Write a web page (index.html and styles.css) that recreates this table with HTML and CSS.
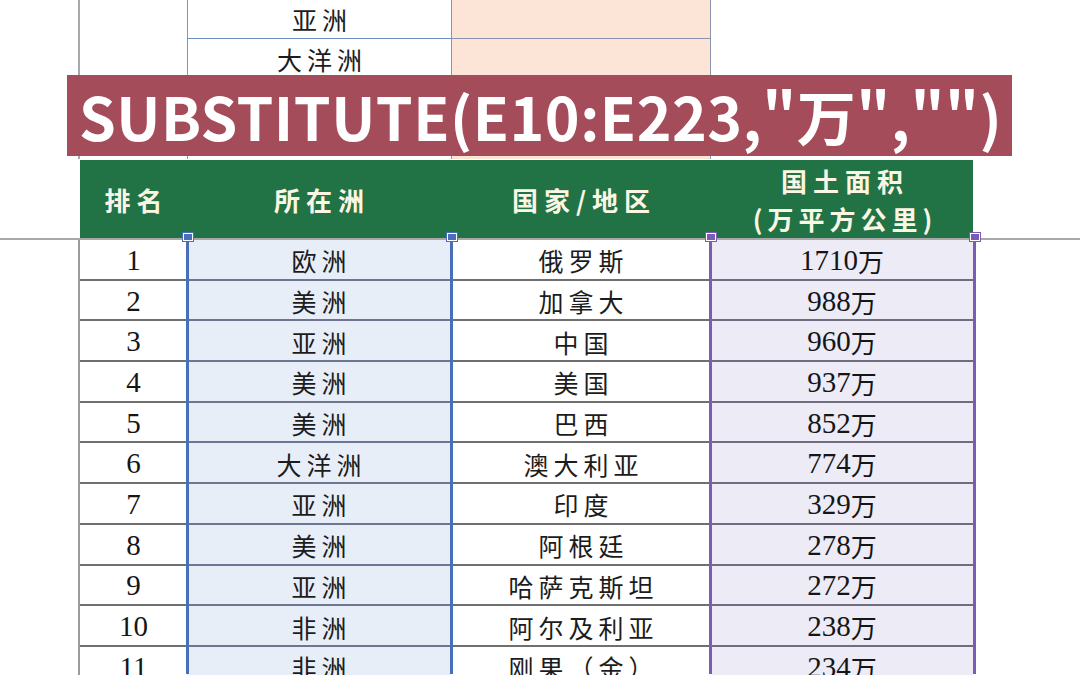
FILE: index.html
```html
<!DOCTYPE html>
<html lang="zh-CN">
<head>
<meta charset="utf-8">
<title>SUBSTITUTE</title>
<link rel="stylesheet" href="styles.css">
</head>
<body>
<div class="sheet">
  <div class="top">
    <div class="g gl"></div><div class="g"></div><div class="g tb zh">亚洲</div><div class="g tp"></div><div class="g"></div><div class="g"></div>
    <div class="g gl"></div><div class="g"></div><div class="g tb zh">大洋洲</div><div class="g tp"></div><div class="g"></div><div class="g"></div>
    <div class="g gl"></div><div class="g"></div><div class="g tb"></div><div class="g tp"></div><div class="g"></div><div class="g"></div>
    <div class="g gl"></div><div class="g"></div><div class="g tb nb"></div><div class="g tp nb"></div><div class="g"></div><div class="g"></div>
  </div>

  <div class="head">
    <div class="hg"></div>
    <div class="h">排名</div>
    <div class="h">所在洲</div>
    <div class="h">国家/地区</div>
    <div class="h two"><span>国土面积</span><span class="paren">(万平方公里)</span></div>
    <div class="hg"></div>
  </div>

  <div class="rows">
    <div class="lg"></div><div class="d num">1</div><div class="d zh cb">欧洲</div><div class="d zh">俄罗斯</div><div class="d num cd">1710<span class="wan">万</span></div><div class="rg"></div>
    <div class="lg"></div><div class="d num">2</div><div class="d zh cb">美洲</div><div class="d zh">加拿大</div><div class="d num cd">988<span class="wan">万</span></div><div class="rg"></div>
    <div class="lg"></div><div class="d num">3</div><div class="d zh cb">亚洲</div><div class="d zh">中国</div><div class="d num cd">960<span class="wan">万</span></div><div class="rg"></div>
    <div class="lg"></div><div class="d num">4</div><div class="d zh cb">美洲</div><div class="d zh">美国</div><div class="d num cd">937<span class="wan">万</span></div><div class="rg"></div>
    <div class="lg"></div><div class="d num">5</div><div class="d zh cb">美洲</div><div class="d zh">巴西</div><div class="d num cd">852<span class="wan">万</span></div><div class="rg"></div>
    <div class="lg"></div><div class="d num">6</div><div class="d zh cb">大洋洲</div><div class="d zh">澳大利亚</div><div class="d num cd">774<span class="wan">万</span></div><div class="rg"></div>
    <div class="lg"></div><div class="d num">7</div><div class="d zh cb">亚洲</div><div class="d zh">印度</div><div class="d num cd">329<span class="wan">万</span></div><div class="rg"></div>
    <div class="lg"></div><div class="d num">8</div><div class="d zh cb">美洲</div><div class="d zh">阿根廷</div><div class="d num cd">278<span class="wan">万</span></div><div class="rg"></div>
    <div class="lg"></div><div class="d num">9</div><div class="d zh cb">亚洲</div><div class="d zh">哈萨克斯坦</div><div class="d num cd">272<span class="wan">万</span></div><div class="rg"></div>
    <div class="lg"></div><div class="d num">10</div><div class="d zh cb">非洲</div><div class="d zh">阿尔及利亚</div><div class="d num cd">238<span class="wan">万</span></div><div class="rg"></div>
    <div class="lg"></div><div class="d num">11</div><div class="d zh cb">非洲</div><div class="d zh">刚果（金）</div><div class="d num cd">234<span class="wan">万</span></div><div class="rg"></div>
  </div>

  <div class="sel sel-b"><span class="hd hl"></span><span class="hd hr"></span></div>
  <div class="sel sel-d"><span class="hd hl"></span><span class="hd hr"></span></div>

  <div class="banner">SUBSTITUTE(E10:E223,"万","")</div>
</div>
</body>
</html>
```

FILE: styles.css
```css
* { box-sizing: border-box; }
html, body { margin: 0; padding: 0; }
body {
  width: 1080px;
  height: 675px;
  overflow: hidden;
  background: #ffffff;
  font-family: "Liberation Serif", "Noto Sans CJK SC", serif;
  color: #1b1b1b;
}
.sheet {
  position: relative;
  width: 1080px;
  height: 675px;
}

/* top partial table */
.top {
  display: grid;
  grid-template-columns: 80px 107px 264px 260px 262px 107px;
  grid-auto-rows: 40px;
  margin-top: -1px;
  height: 161px;
}
.g {
  display: flex;
  align-items: center;
  justify-content: center;
}
.gl { border-right: 2px solid #a9a9ad; }
.tb {
  border-left: 1.5px solid #7d95c8;
  border-bottom: 1.5px solid #6e8cc8;
  background: #ffffff;
}
.tp {
  background: #fce4d6;
  border-left: 1.5px solid #7d95c8;
  border-right: 1.5px solid #8c93ad;
  border-bottom: 1.5px solid #8c93ad;
}
.nb { border-bottom: none; }

.zh {
  font-family: "Noto Sans CJK SC", sans-serif;
  font-size: 25px;
  letter-spacing: 5px;
  padding-left: 5px;
  color: #1c1c1c;
}

/* header row */
.head {
  display: grid;
  grid-template-columns: 80px 107px 264px 260px 262px 107px;
  height: 78px;
}
.h {
  background: #217346;
  color: #fbf6e4;
  font-family: "Noto Sans CJK SC", sans-serif;
  font-weight: 700;
  font-size: 26px;
  letter-spacing: 6px;
  padding-left: 6px;
  display: flex;
  align-items: center;
  justify-content: center;
}
.h.two {
  flex-direction: column;
  line-height: 38px;
  padding-top: 2px;
}
.h .paren { letter-spacing: 5px; }

/* data rows */
.rows {
  display: grid;
  grid-template-columns: 80px 107px 264px 260px 262px 107px;
  grid-auto-rows: 40.7px;
  border-top: 2px solid #a8a8a8;
}
.lg { border-right: 2px solid #9c9c9c; }
.d {
  display: flex;
  align-items: center;
  justify-content: center;
  border-bottom: 2px solid #6f6f6f;
  padding-top: 2px;
}
.num {
  font-family: "Liberation Serif", serif;
  font-size: 29px;
  color: #151515;
}
.wan {
  font-family: "Noto Sans CJK SC", sans-serif;
  font-size: 26px;
  font-weight: 400;
}
.cb { background: #e8eef8; border-bottom-color: #6c7690; }
.cd { background: #ecebf6; border-bottom-color: #6f6c80; }

/* selection outlines over columns */
.sel {
  position: absolute;
  top: 238px;
  bottom: 0;
  border-left: 3px solid #4a6fb8;
  border-right: 3px solid #4a6fb8;
}
.sel-b { left: 186px; width: 267px; }
.sel-d { left: 709px; width: 267px; border-color: #7b5bb3; }
.hd {
  position: absolute;
  top: -4px;
  width: 10px;
  height: 8px;
  background: #4a6fb8;
  border: 1.5px solid #ffffff;
  outline: 1px solid #4a6fb8;
}
.sel-d .hd { background: #7b5bb3; outline-color: #7b5bb3; }
.hl { left: -6.5px; }
.hr { right: -6.5px; }

/* formula banner */
.banner {
  position: absolute;
  left: 67px;
  top: 76px;
  width: 945px;
  height: 81px;
  background: #a54c5a;
  color: #ffffff;
  font-family: "Noto Sans CJK SC", sans-serif;
  font-weight: 700;
  font-size: 59px;
  line-height: 81px;
  padding-left: 12px;
  white-space: nowrap;
  letter-spacing: 0.5px;
}
```
